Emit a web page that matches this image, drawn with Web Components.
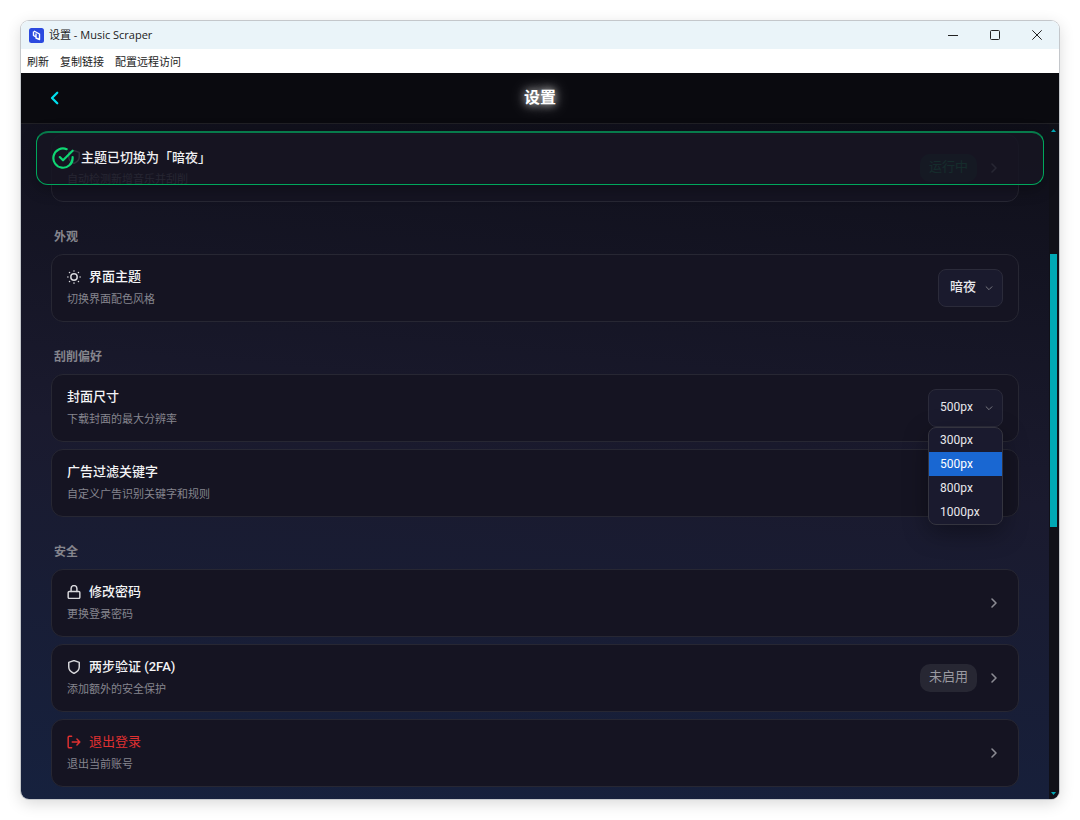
<!DOCTYPE html>
<html lang="zh-CN">
<head>
<meta charset="utf-8">
<title>设置 - Music Scraper</title>
<style>
  body { margin: 0; background: #fff; font-family: Roboto, "Noto Sans CJK SC", sans-serif; }
</style>
</head>
<body>
<app-window caption="设置 - Music Scraper">
  <a slot="menu" href="#refresh">刷新</a>
  <a slot="menu" href="#copy">复制链接</a>
  <a slot="menu" href="#remote">配置远程访问</a>
  <page-header slot="header">设置</page-header>
  <toast-message slot="toast">主题已切换为「暗夜」</toast-message>

  <settings-section>
    <setting-card icon="shield" arrow>
      <span slot="desc">自动检测新增音乐并刮削</span>
      <status-badge slot="control" tone="on">运行中</status-badge>
    </setting-card>
  </settings-section>

  <settings-section label="外观">
    <setting-card icon="sun">界面主题
      <span slot="desc">切换界面配色风格</span>
      <drop-down slot="control" label="界面主题" options="暗夜" value="暗夜"></drop-down>
    </setting-card>
  </settings-section>

  <settings-section label="刮削偏好">
    <setting-card raised>封面尺寸
      <span slot="desc">下载封面的最大分辨率</span>
      <drop-down slot="control" label="封面尺寸" options="300px,500px,800px,1000px" value="500px" open></drop-down>
    </setting-card>
    <setting-card arrow>广告过滤关键字
      <span slot="desc">自定义广告识别关键字和规则</span>
    </setting-card>
  </settings-section>

  <settings-section label="安全">
    <setting-card icon="lock" arrow>修改密码
      <span slot="desc">更换登录密码</span>
    </setting-card>
    <setting-card icon="shield" arrow>两步验证 (2FA)
      <span slot="desc">添加额外的安全保护</span>
      <status-badge slot="control">未启用</status-badge>
    </setting-card>
    <setting-card icon="logout" danger arrow>退出登录
      <span slot="desc">退出当前账号</span>
    </setting-card>
  </settings-section>
</app-window>

<script>
const svg = (size, body, w = 2) =>
  `<svg width="${size}" height="${size}" viewBox="0 0 24 24" fill="none" stroke="currentColor" stroke-width="${w}" stroke-linecap="round" stroke-linejoin="round" aria-hidden="true">${body}</svg>`;

const ICONS = {
  sun: '<circle cx="12" cy="12" r="5.500"/><path d="M12 1.500v.1M12 22.400v.1M4.300 4.300l.1.1M19.600 19.600l.1.1M1.500 12h.1M22.400 12h.1M4.300 19.700l.1-.1M19.600 4.400l.1-.1"/>',
  lock: '<rect x="2" y="11" width="20" height="12" rx="2"/><path d="M7 11V6a5 5 0 0 1 10 0v5"/>',
  shield: '<path d="M12 23s9-4 9-11V4l-9-3-9 3v8c0 7 9 11 9 11z"/>',
  logout: '<path d="M8 22H4a2 2 0 0 1-2-2V4a2 2 0 0 1 2-2h4M17 17l5-5-5-5M22 12H9"/>'
};

class BaseElement extends HTMLElement {
  render(html) {
    if (!this.shadowRoot) this.attachShadow({ mode: 'open' });
    this.shadowRoot.innerHTML = html;
  }
}

customElements.define('app-window', class extends BaseElement {
  connectedCallback() {
    this.render(`
      <style>
        :host { display: block; padding: 21px; }
        .window { position: relative; border-radius: 8px; overflow: hidden; background: #fff; }
        .frame { border-radius: 8px; box-shadow: 0 0 0 1px #c4c7cb, 0 4px 16px rgba(0,0,0,.16); }
        .bar { display: flex; align-items: center; height: 28px; padding: 0 1px 0 8px; background: #eaf4f9; color: #1b1b1b; font: 11px/28px "Open Sans", "Noto Sans CJK SC", sans-serif; }
        .bar .name { flex: 1; padding-left: 5px; }
        .bar button { display: grid; place-items: center; width: 42px; height: 28px; padding: 0; border: 0; background: none; color: #222; }
        nav { display: flex; gap: 11px; height: 24px; padding: 0 6px; }
        ::slotted(a) { color: #222; text-decoration: none; font: 11px/24px "Noto Sans CJK SC", sans-serif; }
        .body { display: flex; background: linear-gradient(185deg, #0f0f19 0%, #1a1a2e 50%, #16213e 100%); }
        main { flex: 1; min-width: 0; padding: 10px 30px 12px; }
        .scroll { display: flex; flex-direction: column; align-items: flex-start; width: 10px; box-sizing: border-box; padding-left: 1px; background: #101018; color: #00a8b5; }
        .scroll i { width: 7px; background: #00a8b5; flex: 272; }
        .scroll .before { flex: 120; }
        .scroll .after { flex: 262; }
        .scroll svg { display: block; }
      </style>
      <div class="frame"><div class="window">
        <div class="bar">
          <svg width="15" height="15" viewBox="0 0 15 15" aria-hidden="true"><rect width="15" height="15" rx="2.500" fill="#2b49df"/><path d="M4.500 3.500L4.500 7.500 7 9M5 3l5.500 3v5.500L7 10V5.500" fill="none" stroke="#fff" stroke-width="1.400" stroke-linejoin="round"/></svg>
          <span class="name">${this.getAttribute('caption')}</span>
          <button aria-label="最小化"><svg width="10" height="10" viewBox="0 0 10 10"><path d="M0 5.500h10" stroke="currentColor"/></svg></button>
          <button aria-label="最大化"><svg width="10" height="10" viewBox="0 0 10 10"><rect x=".5" y=".5" width="9" height="9" rx="1" fill="none" stroke="currentColor"/></svg></button>
          <button aria-label="关闭"><svg width="10" height="10" viewBox="0 0 10 10"><path d="M.3.3l9.400 9.400M9.700.3L.3 9.700" stroke="currentColor"/></svg></button>
        </div>
        <nav><slot name="menu"></slot></nav>
        <slot name="header"></slot>
        <div class="body">
          <main><slot></slot></main>
          <div class="scroll" aria-hidden="true">
            <svg width="6" height="10" viewBox="0 0 6 10"><path d="M1 8l2.500-3L6 8z" fill="currentColor"/></svg>
            <span class="before"></span><i></i><span class="after"></span>
            <svg width="6" height="10" viewBox="0 0 6 10"><path d="M1 3l2.500 3L6 3z" fill="currentColor"/></svg>
          </div>
        </div>
        <slot name="toast"></slot>
      </div></div>`);
  }
});

customElements.define('page-header', class extends BaseElement {
  connectedCallback() {
    this.render(`
      <style>
        :host { display: grid; grid-template-columns: 67px 1fr 67px; align-items: center; height: 51px; box-sizing: border-box; background: #0a0a0f; border-bottom: 1px solid #202025; color: #fff; }
        button { display: grid; place-items: center; height: 50px; padding: 0; border: 0; background: none; color: #00e0ee; }
        h1 { margin: 0; text-align: center; font-size: 16px; line-height: 24px; font-weight: 700; text-shadow: 0 0 8px rgba(255,255,255,.8), 0 0 16px rgba(255,255,255,.5); }
      </style>
      <button aria-label="返回">${svg(18, '<path d="M15 19l-7-7 7-7"/>', 3)}</button>
      <h1><slot></slot></h1>`);
  }
});

customElements.define('toast-message', class extends BaseElement {
  connectedCallback() {
    this.setAttribute('role', 'status');
    this.render(`
      <style>
        :host { position: absolute; z-index: 5; top: 110px; left: 15px; right: 15px; display: flex; align-items: center; gap: 7px; height: 54px; box-sizing: border-box; padding: 0 15px 2px; border: 1px solid #00a75c; border-top: 2px solid #077b4b; border-radius: 12px; background: rgba(22,21,34,.86); box-shadow: 0 4px 16px rgba(0,0,0,.3); color: #f0f0f2; font-size: 13px; line-height: 20px; font-weight: 500; }
        svg { color: #0fd673; }
      </style>
      ${svg(22, '<path d="M22.500 11v1A10.500 10.500 0 1 1 16 2.400"/><path d="M22.500 4L12 14.500l-3.500-3.500"/>', 2.4)}
      <span><slot></slot></span>`);
  }
});

customElements.define('settings-section', class extends BaseElement {
  connectedCallback() {
    const label = this.getAttribute('label');
    this.render(`
      <style>
        :host { display: flex; flex-direction: column; gap: 7px; }
        h2 { margin: 0; height: 45px; box-sizing: border-box; padding: 25px 3px 0; color: #85858d; font-size: 12px; line-height: 20px; font-weight: 700; }
      </style>
      ${label ? `<h2>${label}</h2>` : ''}
      <slot></slot>`);
  }
});

customElements.define('setting-card', class extends BaseElement {
  connectedCallback() {
    const icon = this.getAttribute('icon');
    this.render(`
      <style>
        :host { position: relative; display: flex; align-items: center; gap: 8px; height: 68px; box-sizing: border-box; padding: 0 15px; border: 1px solid #272733; border-radius: 12px; background: #151422; color: #f4f4f6; }
        :host([raised]) { z-index: 2; }
        .text { flex: 1; min-width: 0; }
        h3 { display: flex; align-items: center; gap: 8px; margin: 0; height: 20px; font-size: 13px; line-height: 20px; font-weight: 500; }
        :host([danger]) h3 { color: #e03131; font-weight: 400; }
        h3 svg { color: #d8d8dc; }
        :host([danger]) h3 svg { color: inherit; }
        p { margin: 4px 0 0; height: 18px; color: #85858e; font-size: 11px; line-height: 18px; }
        .go { display: grid; place-items: center; width: 18px; height: 32px; padding: 0; border: 0; background: none; color: #8b8b93; }
      </style>
      <div class="text">
        <h3>${icon ? svg(14, ICONS[icon], 2.5) : ''}<span><slot></slot></span></h3>
        <p><slot name="desc"></slot></p>
      </div>
      <slot name="control"></slot>
      ${this.hasAttribute('arrow') ? `<button class="go" aria-label="打开">${svg(16, '<path d="M9 18l6-6-6-6"/>', 2.4)}</button>` : ''}`);
  }
});

customElements.define('status-badge', class extends BaseElement {
  connectedCallback() {
    this.render(`
      <style>
        :host { display: block; padding: 3px 9px 5px; border-radius: 10px; background: #272733; color: #9a9aa1; font-size: 13px; line-height: 20px; }
        :host([tone="on"]) { background: #12352f; color: #12b96c; }
      </style>
      <slot></slot>`);
  }
});

customElements.define('drop-down', class extends BaseElement {
  connectedCallback() {
    const options = this.getAttribute('options').split(',');
    const value = this.getAttribute('value');
    const open = this.hasAttribute('open');
    this.render(`
      <style>
        :host { position: relative; display: block; color: #e8e8ec; }
        label { position: relative; display: grid; align-items: center; }
        select { appearance: none; height: 38px; width: ${open ? 75 : 65}px; padding: 0 11px 2px; border: 1px solid #2b2b3a; border-radius: 8px; background: #1a1a2d; color: inherit; font: ${open ? '400 12px' : '500 13px'}/20px Roboto, "Noto Sans CJK SC", sans-serif; }
        label svg { position: absolute; right: 9px; color: #77777f; pointer-events: none; }
        ul { position: absolute; top: 100%; left: 0; right: 0; margin: 0; padding: 0; list-style: none; border: 1px solid #34343f; border-radius: 8px; background: #1a1a2e; box-shadow: 0 8px 24px rgba(0,0,0,.35); overflow: hidden; font-size: 12px; line-height: 24px; }
        li { padding: 0 11px; height: 24px; }
        li[aria-selected="true"] { background: #1967d2; color: #fff; }
      </style>
      <label>
        <select aria-label="${this.getAttribute('label')}">${options.map(o => `<option${o === value ? ' selected' : ''}>${o}</option>`).join('')}</select>
        ${svg(10, '<path d="M5 9l7 7 7-7"/>', 2.4)}
      </label>
      ${open ? `<ul role="listbox">${options.map(o => `<li role="option" aria-selected="${o === value}">${o}</li>`).join('')}</ul>` : ''}`);
  }
});
</script>
</body>
</html>
